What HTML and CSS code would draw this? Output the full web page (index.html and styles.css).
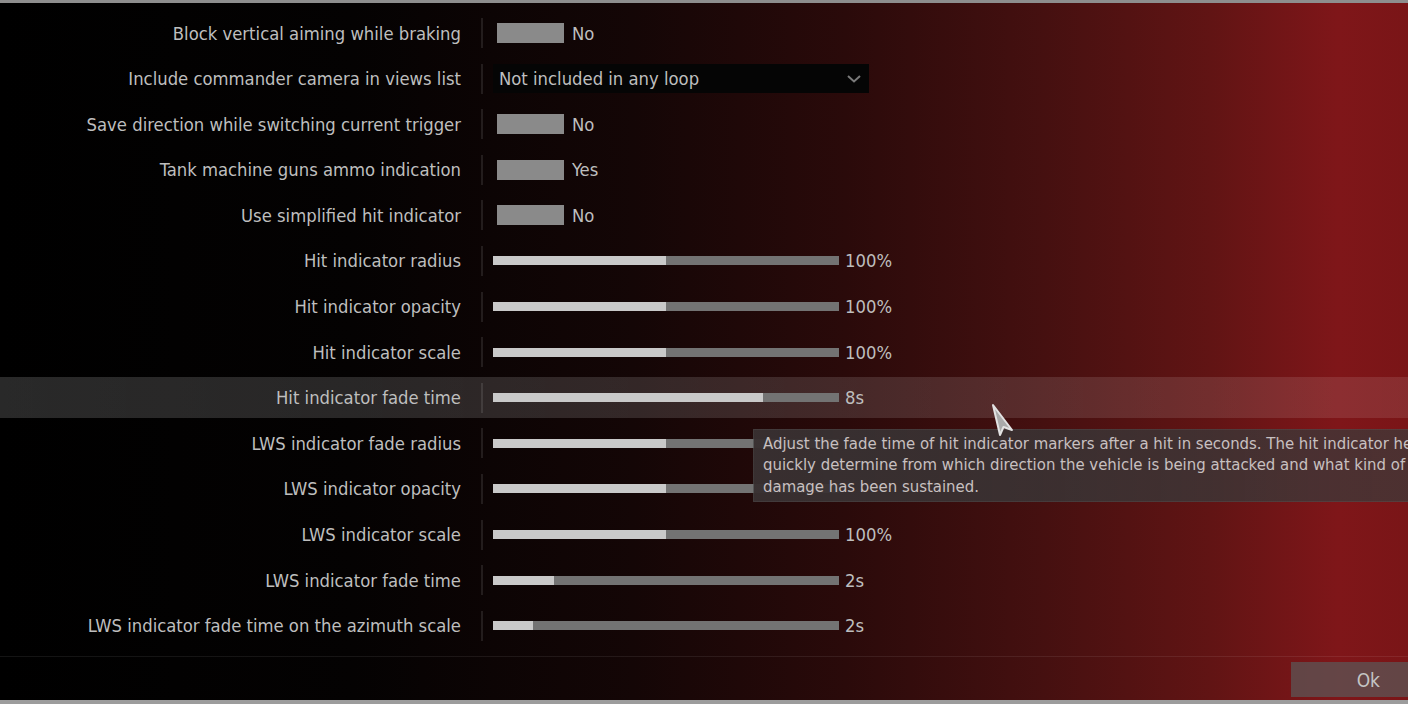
FILE: index.html
```html
<!DOCTYPE html>
<html lang="en">
<head>
    <meta charset="UTF-8">
    <title>Hud settings</title>
    <link rel="stylesheet" href="styles.css">
</head>
<body>
    <div class="frame">
        <div class="options">
            <div class="row">
                <span class="label">Block vertical aiming while braking</span>
                <span class="sep"></span>
                <div class="toggle"><span class="box"></span><span class="value">No</span></div>
            </div>
            <div class="row">
                <span class="label">Include commander camera in views list</span>
                <span class="sep"></span>
                <div class="select">
                    <span>Not included in any loop</span>
                    <svg class="chevron" width="16" height="10" viewBox="0 0 16 10"><path d="M2 2 L8 7.5 L14 2" fill="none" stroke="#7a7a7a" stroke-width="2"/></svg>
                </div>
            </div>
            <div class="row">
                <span class="label">Save direction while switching current trigger</span>
                <span class="sep"></span>
                <div class="toggle"><span class="box"></span><span class="value">No</span></div>
            </div>
            <div class="row">
                <span class="label">Tank machine guns ammo indication</span>
                <span class="sep"></span>
                <div class="toggle"><span class="box"></span><span class="value">Yes</span></div>
            </div>
            <div class="row">
                <span class="label">Use simplified hit indicator</span>
                <span class="sep"></span>
                <div class="toggle"><span class="box"></span><span class="value">No</span></div>
            </div>
            <div class="row">
                <span class="label">Hit indicator radius</span>
                <span class="sep"></span>
                <div class="slider"><span class="track"><span class="fill" style="width: 50%"></span></span><span class="value">100%</span></div>
            </div>
            <div class="row">
                <span class="label">Hit indicator opacity</span>
                <span class="sep"></span>
                <div class="slider"><span class="track"><span class="fill" style="width: 50%"></span></span><span class="value">100%</span></div>
            </div>
            <div class="row">
                <span class="label">Hit indicator scale</span>
                <span class="sep"></span>
                <div class="slider"><span class="track"><span class="fill" style="width: 50%"></span></span><span class="value">100%</span></div>
            </div>
            <div class="row active">
                <span class="label">Hit indicator fade time</span>
                <span class="sep"></span>
                <div class="slider"><span class="track"><span class="fill" style="width: 78%"></span></span><span class="value">8s</span></div>
            </div>
            <div class="row">
                <span class="label">LWS indicator fade radius</span>
                <span class="sep"></span>
                <div class="slider"><span class="track"><span class="fill" style="width: 50%"></span></span><span class="value covered">100%</span></div>
            </div>
            <div class="row">
                <span class="label">LWS indicator opacity</span>
                <span class="sep"></span>
                <div class="slider"><span class="track"><span class="fill" style="width: 50%"></span></span><span class="value covered">100%</span></div>
            </div>
            <div class="row">
                <span class="label">LWS indicator scale</span>
                <span class="sep"></span>
                <div class="slider"><span class="track"><span class="fill" style="width: 50%"></span></span><span class="value">100%</span></div>
            </div>
            <div class="row">
                <span class="label">LWS indicator fade time</span>
                <span class="sep"></span>
                <div class="slider"><span class="track"><span class="fill" style="width: 17.6%"></span></span><span class="value">2s</span></div>
            </div>
            <div class="row">
                <span class="label">LWS indicator fade time on the azimuth scale</span>
                <span class="sep"></span>
                <div class="slider"><span class="track"><span class="fill" style="width: 11.6%"></span></span><span class="value">2s</span></div>
            </div>
        </div>

        <div class="footer">
            <button class="ok-btn">Ok</button>
        </div>

        <!-- hint for the hovered row -->
        <div class="tooltip">
            Adjust the fade time of hit indicator markers after a hit in seconds. The hit indicator helps to<br>
            quickly determine from which direction the vehicle is being attacked and what kind of<br>
            damage has been sustained.
        </div>

        <svg class="cursor" width="26" height="36" viewBox="0 0 26 36">
            <path d="M3 2 L10 32 L13.5 24 L22 27 Z" fill="#a9a9a9" stroke="#e2e2e2" stroke-width="2" stroke-linejoin="round"/>
        </svg>
    </div>
</body>
</html>
```

FILE: styles.css
```css
body {
    margin: 0;
    width: 1408px;
    height: 704px;
    overflow: hidden;
    font-family: "Liberation Sans Narrow", "DejaVu Sans Condensed", "Liberation Sans", sans-serif;
    color: #bebebe;
    background: linear-gradient(90deg, #000 0%, #040202 25%, #140606 45%, #2a0a0a 60%, #451010 74%, #611414 86%, #7f1619 95%, #7a1517 100%);
}
.frame {
    position: relative;
    box-sizing: border-box;
    height: 704px;
    display: flex;
    flex-direction: column;
    border-top: 3px solid #8e8e8e;
    border-bottom: 4px solid #9c9c9c;
}
.options {
    display: flex;
    flex-direction: column;
    gap: 4.6px;
    padding-top: 9.5px;
}
.row {
    display: flex;
    align-items: center;
    height: 41px;
    font-size: 18.3px;
}
.row.active {
    background: linear-gradient(90deg, rgba(255, 255, 255, 0.16), rgba(255, 255, 255, 0.1));
}
.label {
    width: 461px;
    text-align: right;
    white-space: nowrap;
}
.sep {
    width: 2px;
    height: 30px;
    margin-left: 20px;
    background: rgba(255, 255, 255, 0.1);
}
.toggle {
    display: flex;
    align-items: center;
    margin-left: 14px;
}
.toggle .box {
    width: 67px;
    height: 20px;
    background: #8a8a8a;
}
.toggle .value {
    margin-left: 8px;
}
.select {
    display: flex;
    align-items: center;
    justify-content: space-between;
    box-sizing: border-box;
    width: 376px;
    height: 29px;
    margin-left: 10px;
    padding: 0 7px 0 6px;
    background: #050505;
}
.slider {
    display: flex;
    align-items: center;
    margin-left: 10px;
}
.track {
    display: block;
    width: 346px;
    height: 9px;
    background: #737373;
}
.fill {
    display: block;
    height: 100%;
    background: #c9c9c9;
}
.slider .value {
    margin-left: 6px;
}
.slider .value.covered {
    visibility: hidden;
}
.footer {
    margin-top: auto;
    display: flex;
    justify-content: flex-end;
    padding: 5px 0 3px;
    border-top: 1px solid rgba(255, 255, 255, 0.08);
}
.ok-btn {
    width: 117px;
    height: 35px;
    padding: 0 28px 0 0;
    border: none;
    text-align: right;
    font-family: inherit;
    font-size: 19px;
    color: #c4c4c4;
    background: rgba(90, 90, 90, 0.7);
}
.tooltip {
    position: absolute;
    left: 753px;
    top: 426px;
    width: 700px;
    padding: 3px 9px 4px;
    white-space: nowrap;
    font-size: 16.6px;
    line-height: 21.3px;
    color: #c8c0c0;
    background: linear-gradient(90deg, rgba(56, 48, 49, 0.97), rgba(60, 60, 60, 0.7));
    border: 1px solid rgba(255, 255, 255, 0.06);
}
.cursor {
    position: absolute;
    left: 990px;
    top: 400px;
}
```
